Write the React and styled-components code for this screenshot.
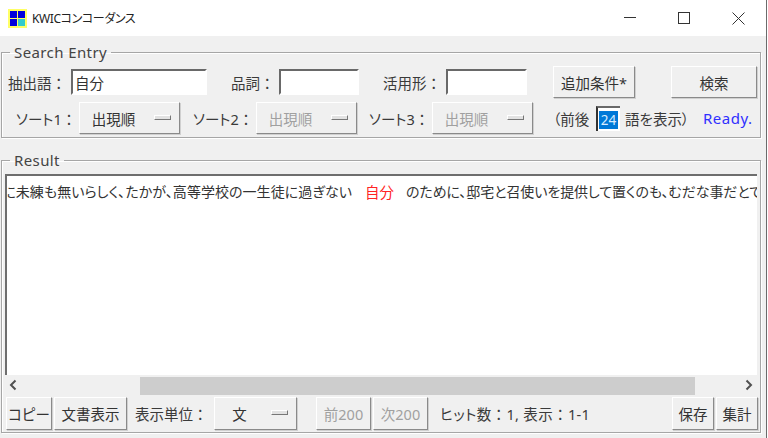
import React from "react";
import styled, { createGlobalStyle } from "styled-components";

const GlobalStyle = createGlobalStyle`
  html, body {
    margin: 0;
    padding: 0;
    background: #ffffff;
    overflow: hidden;
  }
  * {
    box-sizing: border-box;
  }
`;

const FONT = `"Noto Sans", "Noto Sans CJK JP", sans-serif`;

const Window = styled.div`
  width: 767px;
  height: 438px;
  display: flex;
  flex-direction: column;
  background: #f0f0f0;
  border-right: 1px solid #6b6b6b;
  font-family: ${FONT};
  font-size: 14.5px;
  font-feature-settings: "palt";
  color: #333;
`;

const TitleBar = styled.div`
  height: 36px;
  flex: none;
  display: flex;
  align-items: center;
  padding-left: 8px;
  background: #fff;
`;

const TitleText = styled.span`
  margin-left: 5px;
  font-size: 12px;
  letter-spacing: -0.4px;
  color: #222;
`;

const WindowControls = styled.div`
  margin-left: auto;
  display: flex;
  align-items: center;
  padding-right: 21px;
  gap: 42px;
`;

const Body = styled.div`
  flex: 1;
  display: flex;
  flex-direction: column;
  padding: 8px 5px 0 1px;
`;

const Group = styled.fieldset`
  margin: ${(p) => p.$mt || 0}px 0 0;
  padding: ${(p) => p.$pt || 0}px 3px 0 3px;
  height: ${(p) => p.$h}px;
  border: 1px solid #a6a6a6;
  box-shadow: inset 1px 1px 0 #fff, 1px 1px 0 #fff;
  min-width: 0;
`;

const Legend = styled.legend`
  margin-left: 5px;
  padding: 0 4px;
  font-size: 15px;
  line-height: 16px;
  letter-spacing: 0.4px;
  color: #444;
`;

const Row = styled.div`
  display: flex;
  align-items: center;
  height: ${(p) => p.$h}px;
  margin: ${(p) => p.$mt || 0}px ${(p) => p.$mr || 0}px 0 0;
`;

const Label = styled.span`
  margin-left: ${(p) => p.$ml || 0}px;
  width: ${(p) => p.$w}px;
  flex: none;
  white-space: nowrap;
  color: #3a3a3a;
`;

// full width colon, the kana around it stay proportional
const Colon = styled.span`
  font-feature-settings: normal;
`;

const Input = styled.input`
  width: ${(p) => p.$w}px;
  height: 26px;
  flex: none;
  padding: 0 0 0 2px;
  border: 2px solid #fff;
  border-top-color: #696969;
  border-left-color: #696969;
  background: #fff;
  font: inherit;
  color: #333;
  outline: none;
`;

const Raised = styled.button`
  display: flex;
  align-items: center;
  justify-content: center;
  flex: none;
  margin-left: ${(p) => p.$ml || 0}px;
  width: ${(p) => p.$w}px;
  height: ${(p) => p.$h || 32}px;
  padding: 0;
  background: #f0f0f0;
  border: 1px solid #fff;
  border-right-color: #8a8a8a;
  border-bottom-color: #8a8a8a;
  box-shadow: 1px 1px 0 #d0d0d0;
  font: inherit;
  color: ${(p) => (p.disabled ? "#a0a0a0" : "#333")};
`;

const SelectText = styled.span`
  flex: 1;
  padding-right: 32px;
  text-align: center;
`;

const Indicator = styled.i`
  position: absolute;
  right: 8px;
  top: 50%;
  width: 17px;
  height: 5px;
  margin-top: -3px;
  background: #e2e2e2;
  border: 1px solid #fff;
  border-right-color: #777;
  border-bottom-color: #777;
`;

const SelectBox = styled(Raised)`
  position: relative;
`;

const Select = ({ w, ml, h, disabled, children }) => (
  <SelectBox as="div" $w={w} $ml={ml} $h={h} disabled={disabled}>
    <SelectText>{children}</SelectText>
    <Indicator />
  </SelectBox>
);

const SpinBox = styled.div`
  width: 24px;
  height: 25px;
  flex: none;
  margin-left: 4px;
  padding: 3px 0 2px 1px;
  background: #fff;
  border-top: 2px solid #696969;
  border-left: 2px solid #333;
`;

const Selected = styled.span`
  display: block;
  width: 19px;
  height: 18px;
  background: #0078d7;
  color: #d8ecff;
  font-size: 13.5px;
  line-height: 18px;
  text-align: center;
`;

const Ready = styled.span`
  margin-left: 13px;
  color: #2f2fff;
  font-size: 15px;
  letter-spacing: 0.5px;
`;

const TextArea = styled.div`
  height: 202px;
  display: flex;
  padding-top: 6px;
  background: #fff;
  border-top: 2px solid #6e6e6e;
  border-left: 2px solid #6e6e6e;
  line-height: 20px;
  font-size: 14px;
  white-space: nowrap;
  overflow: hidden;
`;

const LeftContext = styled.div`
  width: 345px;
  flex: none;
  display: flex;
  justify-content: flex-end;
  overflow: hidden;
  letter-spacing: 0.05px;
`;

const Keyword = styled.span`
  margin-left: 13px;
  margin-right: 12px;
  color: #ff2424;
  font-size: 14.5px;
  flex: none;
`;

const RightContext = styled.span`
  letter-spacing: -0.1px;
`;

const ScrollBar = styled.div`
  height: 20px;
  display: flex;
  align-items: stretch;
  background: #f0f0f0;
  margin-top: -1px;
`;

const ScrollArrow = styled.div`
  width: ${(p) => p.$w}px;
  flex: none;
  display: flex;
  align-items: center;
  justify-content: center;
`;

const ScrollTrack = styled.div`
  flex: 1;
  padding-top: 2px;
`;

const ScrollThumb = styled.div`
  margin-left: 119px;
  width: 555px;
  height: 100%;
  background: #cdcdcd;
`;

const Status = styled.span`
  margin-left: 12px;
  flex: none;
  white-space: nowrap;
  letter-spacing: 0.35px;
  color: #3a3a3a;
`;

const Spacer = styled.div`
  flex: 1;
`;

const Chevron = ({ flip }) => (
  <svg width="8" height="12" viewBox="0 0 8 12">
    <path
      d={flip ? "M1.5 1.5 6 6 1.5 10.5" : "M6.5 1.5 2 6 6.5 10.5"}
      fill="none"
      stroke="#505050"
      strokeWidth="2"
    />
  </svg>
);

const AppIcon = () => (
  <svg width="19" height="19" viewBox="0 0 19 19">
    <rect width="19" height="19" fill="#ffff66" />
    <rect x="2" y="2" width="7" height="7" fill="#0000dd" />
    <rect x="10" y="2" width="7" height="7" fill="#0000dd" />
    <rect x="2" y="10" width="7" height="7" fill="#0000dd" />
    <rect x="10" y="10" width="7" height="7" fill="#33cccc" />
  </svg>
);

const Controls = () => (
  <WindowControls>
    <svg width="12" height="12" viewBox="0 0 12 12">
      <path d="M0 5.5H12" stroke="#333" strokeWidth="1" />
    </svg>
    <svg width="12" height="12" viewBox="0 0 12 12">
      <rect x="0.5" y="0.5" width="11" height="11" fill="none" stroke="#333" />
    </svg>
    <svg width="13" height="13" viewBox="0 0 13 13">
      <path d="M0.5 0.5 12.5 12.5M12.5 0.5 0.5 12.5" stroke="#333" strokeWidth="1" />
    </svg>
  </WindowControls>
);

export default function App() {
  return (
    <>
      <GlobalStyle />
      <Window>
        <TitleBar>
          <AppIcon />
          <TitleText>KWICコンコーダンス</TitleText>
          <Controls />
        </TitleBar>
        <Body>
          <Group $h={94}>
            <Legend>Search Entry</Legend>
            <Row $h={34} $mt={5}>
              <Label $w={63} $ml={3}>抽出語<Colon>：</Colon></Label>
              <Input $w={136} defaultValue="自分" />
              <Label $w={48} $ml={24}>品詞<Colon>：</Colon></Label>
              <Input $w={80} />
              <Label $w={63} $ml={24}>活用形<Colon>：</Colon></Label>
              <Input $w={81} />
              <Raised $w={82} $ml={26}>追加条件*</Raised>
              <Raised $w={86} $ml={36}>検索</Raised>
            </Row>
            <Row $h={32} $mt={3}>
              <Label $w={63} $ml={11}>ソート1<Colon>：</Colon></Label>
              <Select w={101}>出現順</Select>
              <Label $w={63} $ml={13}>ソート2<Colon>：</Colon></Label>
              <Select w={101} disabled>出現順</Select>
              <Label $w={63} $ml={12}>ソート3<Colon>：</Colon></Label>
              <Select w={101} disabled>出現順</Select>
              <Label $w={39} $ml={20}>（前後</Label>
              <SpinBox><Selected>24</Selected></SpinBox>
              <Label $w={65} $ml={5}>語を表示）</Label>
              <Ready>Ready.</Ready>
            </Row>
          </Group>
          <Group $h={281} $mt={14} $pt={6}>
            <Legend>Result</Legend>
            <TextArea>
              <LeftContext>
                <span>に未練も無いらしく、たかが、高等学校の一生徒に過ぎない</span>
              </LeftContext>
              <Keyword>自分</Keyword>
              <RightContext>のために、邸宅と召使いを提供して置くのも、むだな事だとでも</RightContext>
            </TextArea>
            <ScrollBar>
              <ScrollArrow $w={16}><Chevron /></ScrollArrow>
              <ScrollTrack>
                <ScrollThumb />
              </ScrollTrack>
              <ScrollArrow $w={16}><Chevron flip /></ScrollArrow>
            </ScrollBar>
            <Row $h={34} $mt={1} $mr={-1}>
              <Raised $w={46} $h={33} $ml={1}>コピー</Raised>
              <Raised $w={73} $h={33} $ml={2}>文書表示</Raised>
              <Label $w={72} $ml={8}>表示単位<Colon>：</Colon></Label>
              <Select w={83} ml={7} h={33}>文</Select>
              <Raised $w={55} $h={33} $ml={19} disabled>前200</Raised>
              <Raised $w={55} $h={33} $ml={2} disabled>次200</Raised>
              <Status>ヒット数<Colon>：</Colon>1, 表示<Colon>：</Colon>1-1</Status>
              <Spacer />
              <Raised $w={42} $h={33}>保存</Raised>
              <Raised $w={42} $h={33} $ml={2}>集計</Raised>
            </Row>
          </Group>
        </Body>
      </Window>
    </>
  );
}
